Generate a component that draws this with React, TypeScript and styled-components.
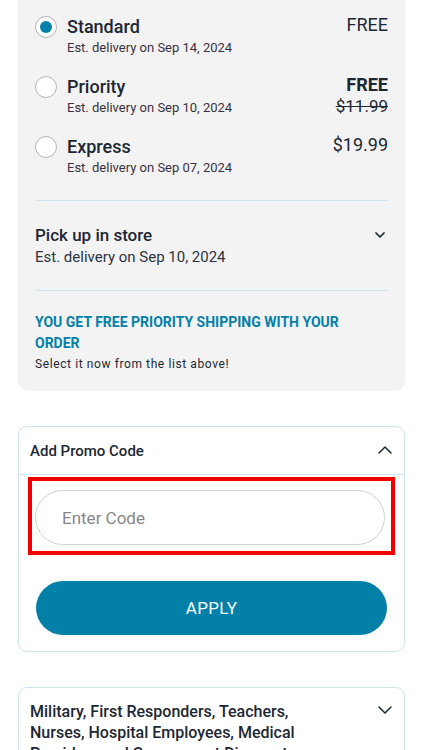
import React from "react";
import styled, { createGlobalStyle } from "styled-components";

const GlobalStyle = createGlobalStyle`
  html, body {
    margin: 0;
    padding: 0;
    background: #fff;
  }
  body {
    font-family: "Roboto", "Liberation Sans", sans-serif;
    color: #1d2733;
    overflow: hidden;
  }
`;

const BLUE = "#0380a8";
const LINE = "#cfe4ec";

const shippingOptions = [
  { name: "Standard", date: "Sep 14, 2024", price: "FREE", selected: true },
  { name: "Priority", date: "Sep 10, 2024", price: "FREE", old: "$11.99" },
  { name: "Express", date: "Sep 07, 2024", price: "$19.99" },
];

const Chevron = ({ up, size = 18, bold }: { up?: boolean; size?: number; bold?: boolean }) => (
  <svg width={size} height={size} viewBox="0 0 18 18" fill="none">
    <path
      d={up ? "M3 12 L9 6 L15 12" : "M3 6 L9 12 L15 6"}
      stroke="#1d2733"
      strokeWidth={bold ? 2.6 : 1.5}
      strokeLinecap="round"
      strokeLinejoin="round"
    />
  </svg>
);

export default function App() {
  return (
    <>
      <GlobalStyle />
      <Page>
        <ShippingCard>
          <Options>
            {shippingOptions.map((o) => (
              <Option key={o.name}>
                <Radio $checked={!!o.selected} />
                <OptionText>
                  <OptionName>{o.name}</OptionName>
                  <OptionDate>Est. delivery on {o.date}</OptionDate>
                </OptionText>
                <Price>
                  <PriceMain $bold={!!o.old}>{o.price}</PriceMain>
                  {o.old && <PriceOld>{o.old}</PriceOld>}
                </Price>
              </Option>
            ))}
          </Options>
          <Divider />
          <Pickup>
            <div>
              <PickupTitle>Pick up in store</PickupTitle>
              <PickupDate>Est. delivery on Sep 10, 2024</PickupDate>
            </div>
            <PickupIcon>
              <Chevron size={12} bold />
            </PickupIcon>
          </Pickup>
          <Divider />
          <Promo>
            <PromoHead>YOU GET FREE PRIORITY SHIPPING WITH YOUR ORDER</PromoHead>
            <PromoSub>Select it now from the list above!</PromoSub>
          </Promo>
        </ShippingCard>

        <Panel>
          <PanelHeader $divided $top={14}>
            <PanelTitle $size={15}>Add Promo Code</PanelTitle>
            <Chevron up />
          </PanelHeader>
          <PanelBody>
            <Highlight>
              <CodeInput placeholder="Enter Code" />
            </Highlight>
            <ApplyButton>APPLY</ApplyButton>
          </PanelBody>
        </Panel>

        <Panel>
          <PanelHeader $top={13}>
            <PanelTitle $size={16}>
              Military, First Responders, Teachers, Nurses, Hospital Employees, Medical
              Providers and Government Discount
            </PanelTitle>
            <Chevron />
          </PanelHeader>
        </Panel>
      </Page>
    </>
  );
}

const Page = styled.div`
  padding: 0 17px 0 18px;
  display: flex;
  flex-direction: column;
  gap: 35px;
  margin-top: -12px;
`;

const ShippingCard = styled.div`
  background: #f3f3f3;
  border-radius: 0 0 10px 10px;
  padding: 21px 17px 17px 17px;
`;

const Options = styled.div`
  padding-bottom: 11px;
`;

const Option = styled.div`
  display: flex;
  align-items: flex-start;
  height: 60px;
`;

const Radio = styled.span<{ $checked: boolean }>`
  flex: none;
  width: 22px;
  height: 22px;
  margin-top: 7px;
  border-radius: 50%;
  background: #fff;
  border: 1px solid #b5b5b5;
  box-sizing: border-box;
  position: relative;
  &::after {
    content: "";
    display: ${(p) => (p.$checked ? "block" : "none")};
    position: absolute;
    left: 4px;
    top: 4px;
    width: 12px;
    height: 12px;
    border-radius: 50%;
    background: ${BLUE};
  }
`;

const OptionText = styled.div`
  flex: 1;
  margin-left: 10px;
`;

const OptionName = styled.div`
  font-size: 18px;
  font-weight: 500;
  line-height: 24px;
  padding-top: 6px;
`;

const OptionDate = styled.div`
  font-size: 13px;
  line-height: 18px;
  color: #3a3140;
`;

const Price = styled.div`
  text-align: right;
  padding-top: 5px;
`;

const PriceMain = styled.div<{ $bold: boolean }>`
  font-size: 18px;
  line-height: 22px;
  font-weight: ${(p) => (p.$bold ? 700 : 400)};
`;

const PriceOld = styled.div`
  font-size: 17px;
  line-height: 20px;
  text-decoration: line-through;
`;

const Divider = styled.hr`
  border: 0;
  border-top: 1px solid ${LINE};
  margin: 0;
`;

const Pickup = styled.div`
  display: flex;
  justify-content: space-between;
  align-items: flex-start;
  padding: 23px 0 22px;
`;

const PickupTitle = styled.div`
  font-size: 17px;
  font-weight: 500;
  line-height: 22px;
`;

const PickupDate = styled.div`
  font-size: 15px;
  line-height: 22px;
  color: #2b3340;
`;

const PickupIcon = styled.span`
  padding-top: 2px;
  padding-right: 2px;
`;

const Promo = styled.div`
  padding-top: 21px;
`;

const PromoHead = styled.div`
  color: ${BLUE};
  font-size: 14px;
  font-weight: 700;
  line-height: 21px;
  width: 320px;
`;

const PromoSub = styled.div`
  font-size: 12px;
  letter-spacing: 0.6px;
  line-height: 20px;
`;

const Panel = styled.div`
  border: 1px solid ${LINE};
  border-radius: 9px;
  background: #fff;
`;

const PanelHeader = styled.div<{ $divided?: boolean; $top: number }>`
  display: flex;
  justify-content: space-between;
  align-items: flex-start;
  gap: 12px;
  padding: ${(p) => p.$top}px 10px 12px 11px;
  border-bottom: ${(p) => (p.$divided ? `1px solid ${LINE}` : "none")};
`;

const PanelTitle = styled.div<{ $size: number }>`
  font-size: ${(p) => p.$size}px;
  font-weight: 500;
  line-height: 21px;
  max-width: 300px;
`;

const PanelBody = styled.div`
  padding: 2px 9px 16px 9px;
  display: flex;
  flex-direction: column;
  gap: 26px;
`;

const Highlight = styled.div`
  border: 4px solid #f20000;
  padding: 9px 6px 6px 3px;
`;

const CodeInput = styled.input`
  display: block;
  width: 100%;
  box-sizing: border-box;
  height: 55px;
  border: 1px solid #cfcfcf;
  border-radius: 28px;
  padding: 0 26px;
  font-family: inherit;
  font-size: 17px;
  outline: none;
  &::placeholder {
    color: #888;
  }
`;

const ApplyButton = styled.button`
  display: block;
  margin: 0 8px 0 8px;
  height: 54px;
  border: 0;
  border-radius: 27px;
  background: ${BLUE};
  color: #fff;
  font-family: inherit;
  font-size: 17px;
  letter-spacing: 0.3px;
`;
